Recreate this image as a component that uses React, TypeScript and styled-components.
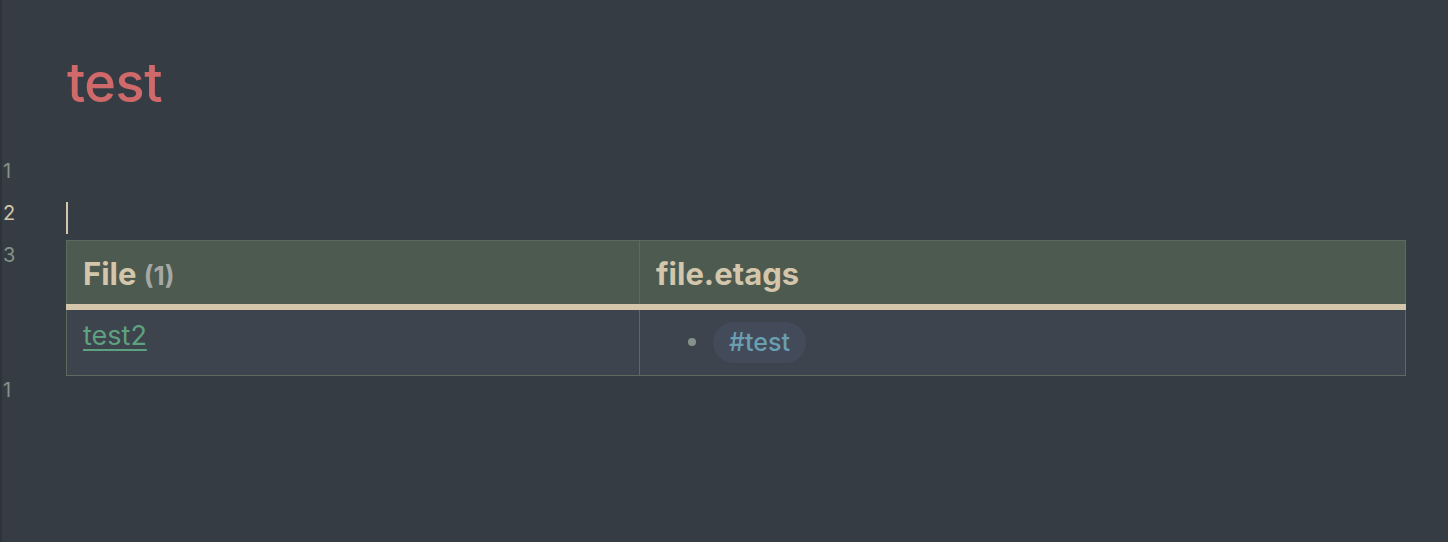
import React from "react";
import styled, { createGlobalStyle } from "styled-components";

const Global = createGlobalStyle`
  html, body { margin: 0; padding: 0; }
  body {
    background: #363c44;
    font-family: Inter, "Noto Sans", sans-serif;
    color: #d3c6aa;
  }
`;

const Page = styled.div`
  height: 542px;
  box-sizing: border-box;
  border-left: 2px solid #2f343b;
  overflow: hidden;
`;

const Title = styled.h1`
  margin: 0;
  padding: 52px 0 0 65px;
  font-size: 54px;
  font-weight: 500;
  line-height: 62px;
  color: #d0696a;
  letter-spacing: -0.5px;
  height: 98px;
`;

const Line = styled.div<{ $h: number }>`
  display: grid;
  grid-template-columns: 64px 1fr;
  min-height: ${(p) => p.$h}px;
`;

const LineNo = styled.div<{ $active?: boolean; $h: number }>`
  padding-left: 1px;
  font-size: 20px;
  line-height: ${(p) => p.$h}px;
  color: ${(p) => (p.$active ? "#d3c6aa" : "#859289")};
`;

const Cursor = styled.div`
  width: 2px;
  height: 32px;
  margin-top: 10px;
  background: #d3c6aa;
`;

const Table = styled.table`
  border-collapse: collapse;
  width: 1340px;
  margin-top: 6px;
  table-layout: fixed;
`;

const HeadCell = styled.th<{ $w?: number }>`
  box-sizing: border-box;
  width: ${(p) => (p.$w ? `${p.$w}px` : "auto")};
  background: #4d5a50;
  border: 1px solid #5d6a60;
  border-bottom: 6px solid #d3c6aa;
  padding: 3px 16px 0;
  height: 66px;
  text-align: left;
  font-size: 31px;
  font-weight: 700;
  color: #d3c6aa;
  white-space: nowrap;
`;

const Count = styled.span`
  font-size: 26px;
  font-weight: 700;
  color: #a6a8a4;
`;

const Cell = styled.td`
  background: #3d444d;
  border: 1px solid #5d6a60;
  padding: 9px 16px 0;
  height: 56px;
  vertical-align: top;
`;

const Link = styled.a`
  font-size: 27px;
  color: #5ea17f;
  text-decoration: underline;
  text-underline-offset: 4px;
  text-decoration-thickness: 2px;
`;

const TagList = styled.ul`
  list-style: none;
  margin: 3px 0 0;
  padding: 0 0 0 32px;
`;

const TagItem = styled.li`
  display: flex;
  align-items: center;
  gap: 17px;
  &::before {
    content: "";
    width: 8px;
    height: 8px;
    border-radius: 50%;
    background: #859289;
  }
`;

const Tag = styled.span`
  display: inline-block;
  background: #434a5a;
  color: #6a9fb2;
  font-size: 25px;
  font-weight: 500;
  line-height: 41px;
  padding: 0 16px;
  border-radius: 21px;
`;

export default function App() {
  return (
    <>
      <Global />
      <Page>
        <Title>test</Title>
        <Line $h={42}>
          <LineNo $h={42}>1</LineNo>
          <div />
        </Line>
        <Line $h={42}>
          <LineNo $h={42} $active>2</LineNo>
          <Cursor />
        </Line>
        <Line $h={42}>
          <LineNo $h={42}>3</LineNo>
          <div>
            <Table>
              <thead>
                <tr>
                  <HeadCell $w={573}>
                    File <Count>(1)</Count>
                  </HeadCell>
                  <HeadCell>file.etags</HeadCell>
                </tr>
              </thead>
              <tbody>
                <tr>
                  <Cell>
                    <Link>test2</Link>
                  </Cell>
                  <Cell>
                    <TagList>
                      <TagItem>
                        <Tag>#test</Tag>
                      </TagItem>
                    </TagList>
                  </Cell>
                </tr>
              </tbody>
            </Table>
          </div>
        </Line>
        <Line $h={28}>
          <LineNo $h={28}>1</LineNo>
          <div />
        </Line>
      </Page>
    </>
  );
}
